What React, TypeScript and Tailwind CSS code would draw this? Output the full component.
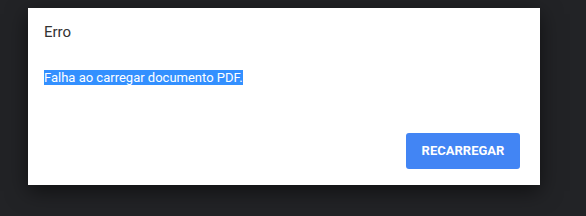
export default function App() {
  return (
    <div className="h-screen w-full overflow-hidden bg-[#222326] pt-[8px] pl-[28px] font-['Roboto',sans-serif]">
      <div className="flex w-[512px] flex-col bg-white px-4 pt-[14px] pb-4 shadow-[0_6px_20px_rgba(0,0,0,0.55)]">
        <div className="text-[15px] leading-5 text-[#333]">Erro</div>
        <div className="mt-[28px] text-[13px] leading-[15px]">
          <span className="bg-[#3390ff] text-white">Falha ao carregar documento PDF.</span>
        </div>
        <div className="mt-[48px] flex justify-end pr-1">
          <button className="h-9 w-[114px] rounded-[3px] bg-[#4285f4] text-[13px] font-bold text-white">
            RECARREGAR
          </button>
        </div>
      </div>
    </div>
  )
}
